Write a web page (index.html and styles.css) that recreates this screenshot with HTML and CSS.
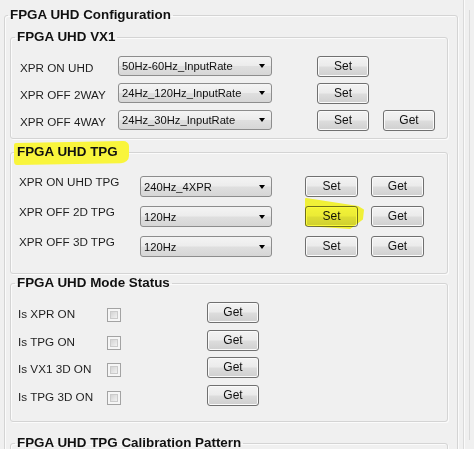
FILE: index.html
```html
<!DOCTYPE html>
<html>
<head>
<meta charset="utf-8">
<link rel="stylesheet" href="styles.css">
</head>
<body>
<div class="page">
  <fieldset class="group outer">
    <legend class="title outer-title">FPGA UHD Configuration</legend>

    <fieldset class="group vx1">
      <legend class="title">FPGA UHD VX1</legend>
      <div class="grid vx1-grid">
        <span class="lbl">XPR ON UHD</span>
        <div class="combo"><span>50Hz-60Hz_InputRate</span><i class="arrow"></i></div>
        <button class="btn">Set</button>
        <span></span>

        <span class="lbl">XPR OFF 2WAY</span>
        <div class="combo"><span>24Hz_120Hz_InputRate</span><i class="arrow"></i></div>
        <button class="btn">Set</button>
        <span></span>

        <span class="lbl">XPR OFF 4WAY</span>
        <div class="combo"><span>24Hz_30Hz_InputRate</span><i class="arrow"></i></div>
        <button class="btn">Set</button>
        <button class="btn">Get</button>
      </div>
    </fieldset>

    <fieldset class="group tpg">
      <legend class="title marked">FPGA UHD TPG</legend>
      <div class="grid tpg-grid">
        <span class="lbl">XPR ON UHD TPG</span>
        <div class="combo"><span>240Hz_4XPR</span><i class="arrow"></i></div>
        <button class="btn">Set</button>
        <button class="btn">Get</button>

        <span class="lbl">XPR OFF 2D TPG</span>
        <div class="combo"><span>120Hz</span><i class="arrow"></i></div>
        <span class="hl-wrap">
          <button class="btn">Set</button>
          <svg class="marker" width="66" height="36" viewBox="0 0 66 36"><polygon points="5,3 57,11 62,14 61,23 49,32 5,29" fill="#ffff3a" stroke="#ffff3a" stroke-width="2" stroke-linejoin="round"/></svg>
        </span>
        <button class="btn">Get</button>

        <span class="lbl">XPR OFF 3D TPG</span>
        <div class="combo"><span>120Hz</span><i class="arrow"></i></div>
        <button class="btn">Set</button>
        <button class="btn">Get</button>
      </div>
    </fieldset>

    <fieldset class="group mode">
      <legend class="title">FPGA UHD Mode Status</legend>
      <div class="grid mode-grid">
        <span class="lbl">Is XPR ON</span><span class="chk"></span><button class="btn">Get</button>
        <span class="lbl">Is TPG ON</span><span class="chk"></span><button class="btn">Get</button>
        <span class="lbl">Is VX1 3D ON</span><span class="chk"></span><button class="btn">Get</button>
        <span class="lbl">Is TPG 3D ON</span><span class="chk"></span><button class="btn">Get</button>
      </div>
    </fieldset>

    <fieldset class="group calib">
      <legend class="title">FPGA UHD TPG Calibration Pattern</legend>
      <div class="calib-body"></div>
    </fieldset>
  </fieldset>

  <div class="side">
    <div class="side-panel"><span class="mark"></span></div>
  </div>
</div>
</body>
</html>
```

FILE: styles.css
```css
html, body {
  margin: 0;
  padding: 0;
  background: #f0f0f0;
  overflow: hidden;
}
body {
  font-family: "Liberation Sans", Arial, sans-serif;
  font-size: 11.7px;
  color: #1e1e1e;
}
.page {
  display: flex;
  align-items: stretch;
  padding-left: 4px;
  min-height: 449px;
}
.group {
  margin: 0;
  padding: 0;
  min-width: 0;
  box-sizing: border-box;
  border: 1px solid #d4d4d4;
  border-radius: 3px;
  box-shadow: inset 1px 1px 0 #fbfbfb, 1px 1px 0 #fbfbfb;
}
.title {
  font-weight: bold;
  font-size: 13.4px;
  line-height: 16px;
  color: #111;
  padding: 0 2px;
  margin-left: 4px;
}
.outer {
  width: 454px;
  margin-top: 7px;
  padding: 0 9px 0 5px;
  align-self: flex-start;
}
.outer-title {
  margin-left: -2px;
}
.vx1 { margin-top: 6px; }
.tpg { margin-top: 5px; }
.mode { margin-top: 1px; }
.calib { margin-top: 13px; }
.calib-body { height: 60px; }

.grid {
  display: grid;
  grid-auto-rows: 21px;
  align-items: start;
}
.vx1-grid {
  padding: 11px 0 7px 9px;
  grid-template-columns: 84px 185px 52px 52px;
  column-gap: 14px;
  row-gap: 6px;
}
.tpg-grid {
  padding: 16px 0 16px 8px;
  grid-template-columns: 108px 152px 53px 53px;
  column-gap: 13px;
  row-gap: 9px;
}
.mode-grid {
  padding: 11px 0 15px 7px;
  grid-template-columns: 89px 100px 52px;
  row-gap: 6.7px;
}

.lbl {
  line-height: 14px;
  white-space: nowrap;
  margin-top: 5px;
}
.tpg-grid .lbl { margin-top: -1px; }

.combo {
  box-sizing: border-box;
  height: 20px;
  border: 1px solid #8d8d8d;
  border-radius: 3px;
  background: linear-gradient(#f4f4f4 0%, #ececec 48%, #dfdfdf 52%, #d6d6d6 100%);
  display: flex;
  align-items: center;
  justify-content: space-between;
  padding: 0 6px 0 3px;
  font-size: 11.2px;
  color: #111;
}
.vx1-grid .combo { width: 154px; }
.tpg-grid .combo { width: 132px; height: 21px; }
.arrow {
  width: 0;
  height: 0;
  border-left: 3.5px solid transparent;
  border-right: 3.5px solid transparent;
  border-top: 4px solid #000;
}

.btn {
  box-sizing: border-box;
  width: 100%;
  height: 21px;
  margin: 0;
  padding: 0;
  border: 1px solid #707070;
  border-radius: 3px;
  background: linear-gradient(#f3f3f3 0%, #ebebeb 48%, #dddddd 52%, #cfcfcf 100%);
  box-shadow: inset 0 0 0 1px #fafafa;
  font-family: "Liberation Sans", Arial, sans-serif;
  font-size: 12px;
  color: #111;
  line-height: 19px;
}

.hl-wrap {
  position: relative;
  display: block;
}
.marker {
  position: absolute;
  left: -4px;
  top: -10px;
  pointer-events: none;
  mix-blend-mode: multiply;
}

.marked {
  position: relative;
  isolation: isolate;
}
.marked::before {
  content: "";
  position: absolute;
  left: -1px;
  right: -9px;
  top: -2px;
  bottom: -4px;
  background: #f9f53c;
  border-radius: 2px 6px 8px 3px / 2px 5px 7px 4px;
  transform: skewY(-1deg);
  z-index: -1;
}

.chk {
  box-sizing: border-box;
  width: 14px;
  height: 14px;
  margin-top: 6px;
  border: 1px solid #a3a3a3;
  background: #f6f6f6;
  padding: 2px;
  display: block;
}
.chk::after {
  content: "";
  display: block;
  width: 100%;
  height: 100%;
  box-sizing: border-box;
  border: 1px solid #cbcbcb;
  background: linear-gradient(135deg, #d4d4d4, #f1f1f1);
}

.side {
  margin-left: 5px;
  width: 6px;
  border-left: 1px solid #dadada;
  box-shadow: inset 1px 0 0 #fbfbfb;
}
.side-panel {
  margin-left: 5px;
  margin-top: 10px;
  height: 430px;
  border-left: 1px solid #dadada;
  display: flex;
}
.mark {
  display: block;
  width: 3px;
  height: 8px;
  margin-left: 2px;
  background: #9a6a3a;
}
```
